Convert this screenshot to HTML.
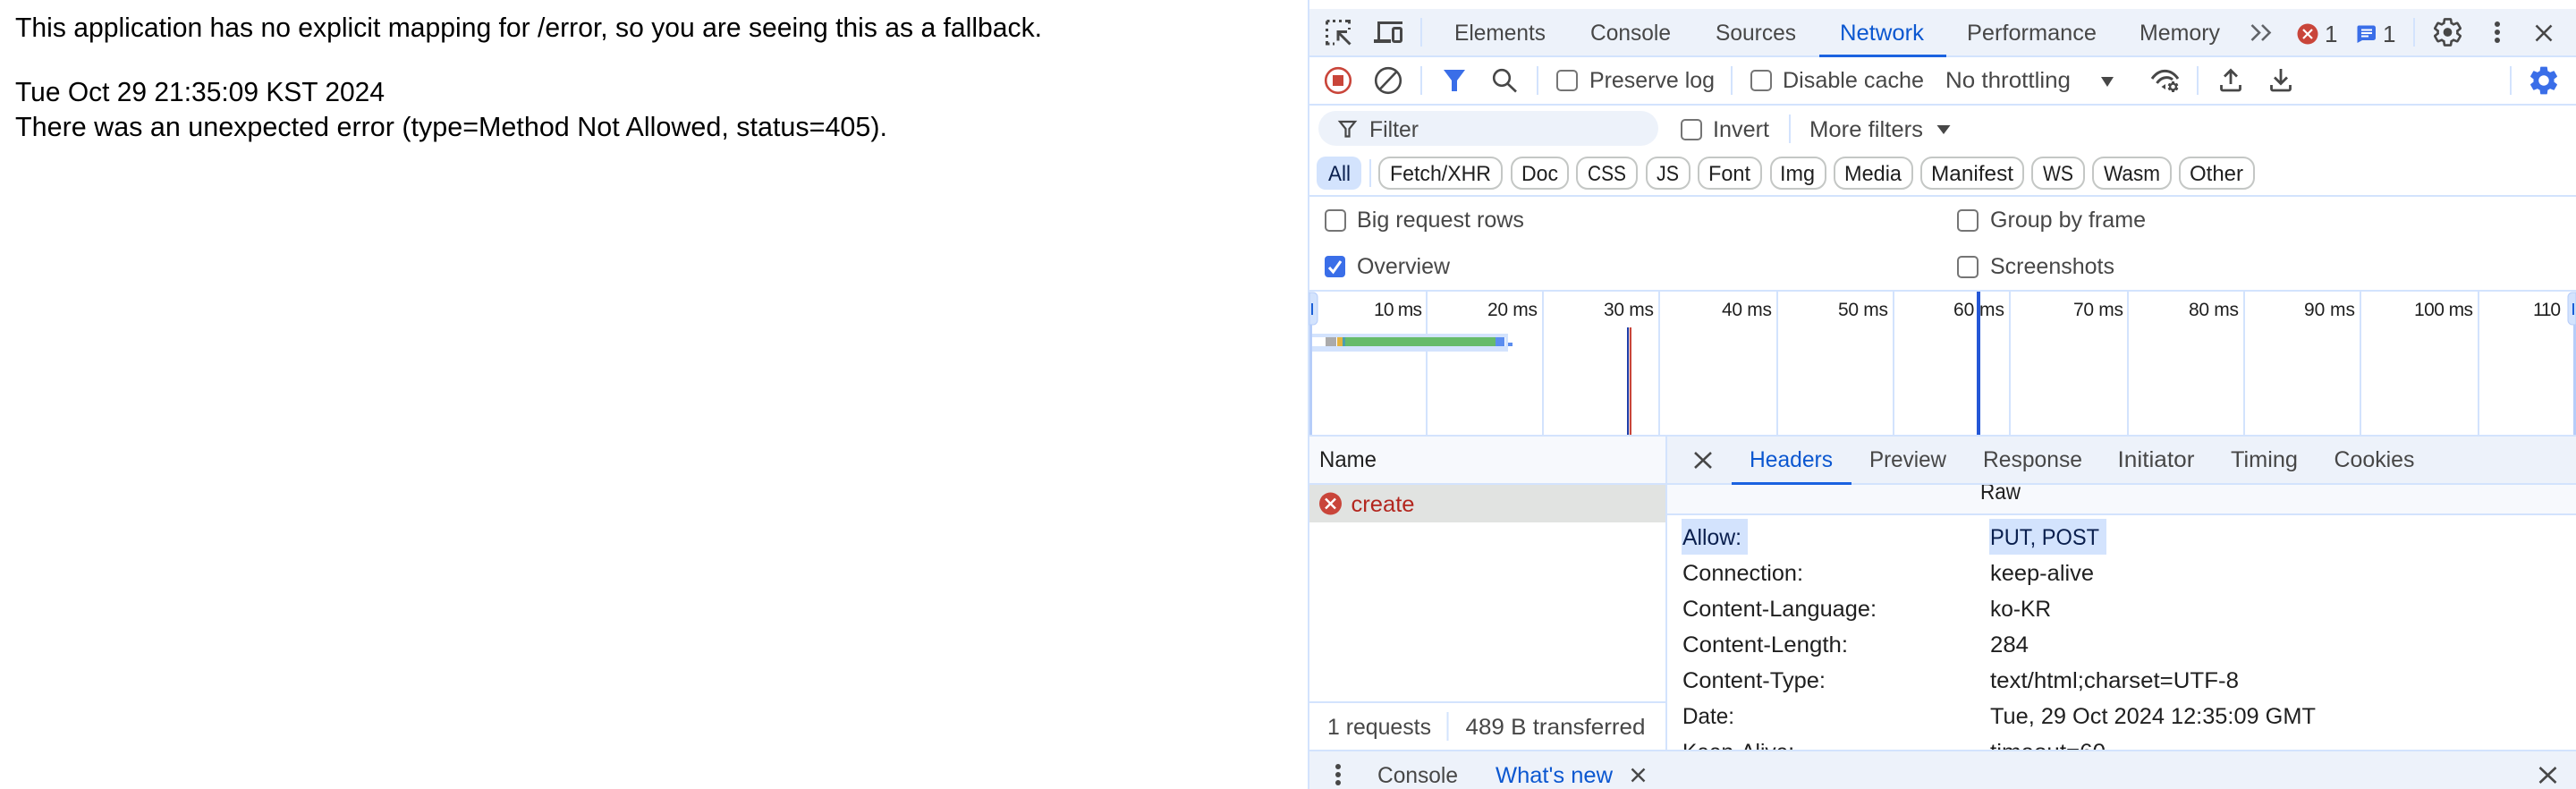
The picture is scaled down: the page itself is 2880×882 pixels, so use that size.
<!DOCTYPE html>
<html lang="en">
<head>
<meta charset="utf-8">
<title>Network DevTools</title>
<style>
html,body{margin:0;padding:0;background:#fff;width:2880px;height:882px;overflow:hidden}
svg{display:block}
text{font-family:"Liberation Sans",sans-serif;font-size:25px;fill:#474747}
.d{fill:#1f1f1f}
.b{fill:#0b57d0}
.s{fill:#0a1f4e}
.m{font-size:31px;fill:#000}
.c{font-size:24.5px;fill:#1f1f1f}
.t{font-size:21px;fill:#1f1f1f}
.l{fill:#d3e3fd}
.i{fill:none;stroke:#474747;stroke-width:2.6}
.cb{fill:#fff;stroke:#757575;stroke-width:2}
.chip{fill:#fff;stroke:#c4c7c5;stroke-width:2}
</style>
</head>
<body>
<svg xmlns="http://www.w3.org/2000/svg" width="2880" height="882" viewBox="0 0 2880 882">
<rect width="2880" height="882" fill="#fff"/>

<!-- page text -->
<text class="m" x="17" y="41" textLength="1148" lengthAdjust="spacingAndGlyphs">This application has no explicit mapping for /error, so you are seeing this as a fallback.</text>
<text class="m" x="17" y="113" textLength="413" lengthAdjust="spacingAndGlyphs">Tue Oct 29 21:35:09 KST 2024</text>
<text class="m" x="17" y="152" textLength="975" lengthAdjust="spacingAndGlyphs">There was an unexpected error (type=Method Not Allowed, status=405).</text>

<!-- devtools left border -->
<rect x="1462" y="0" width="2" height="882" class="l"/>

<!-- main tab bar -->
<rect x="1464" y="10" width="1416" height="52" fill="#edf2fa"/>
<rect x="1464" y="62" width="1416" height="2" class="l"/>

<!-- inspect icon -->
<path d="M1483.500 23.500h3M1490 23.500h3M1497 23.500h3M1504 23.500h4.500v3M1508.500 31v2M1483.500 23.500v4M1483.500 32v3M1483.500 39v3M1483.500 46v3h3M1490 49h2" fill="none" stroke="#474747" stroke-width="3"/>
<path d="M1509.500 49.500L1497 37M1496 45.500V35.500H1506" fill="none" stroke="#474747" stroke-width="3"/>
<!-- device icon -->
<path d="M1541.500 45V25.500H1568" fill="none" stroke="#474747" stroke-width="3"/>
<path d="M1536 46H1555" fill="none" stroke="#474747" stroke-width="4"/>
<rect x="1557.500" y="31.500" width="9" height="15" rx="1.500" fill="none" stroke="#474747" stroke-width="3"/>
<rect x="1588" y="20" width="2" height="32" class="l"/>

<text x="1626" y="45" textLength="102" lengthAdjust="spacingAndGlyphs">Elements</text>
<text x="1778" y="45" textLength="90" lengthAdjust="spacingAndGlyphs">Console</text>
<text x="1918" y="45" textLength="90" lengthAdjust="spacingAndGlyphs">Sources</text>
<text class="b" x="2057" y="45" textLength="94" lengthAdjust="spacingAndGlyphs">Network</text>
<rect x="2034" y="61" width="142" height="3" fill="#1b62e0"/>
<text x="2199" y="45" textLength="145" lengthAdjust="spacingAndGlyphs">Performance</text>
<text x="2392" y="45" textLength="90" lengthAdjust="spacingAndGlyphs">Memory</text>
<path d="M2517.500 28L2526 36.500L2517.500 45M2529 28L2537.500 36.500L2529 45" fill="none" stroke="#606368" stroke-width="2.600"/>

<circle cx="2580" cy="38" r="11.500" fill="#c9453a"/>
<path d="M2575 33L2585 43M2585 33L2575 43" stroke="#fff" stroke-width="2.200"/>
<text x="2599" y="47" style="font-size:26px">1</text>
<path d="M2637.500 28.500H2653.500A2.500 2.500 0 0 1 2656 31V42.500A2.500 2.500 0 0 1 2653.500 45H2641L2635.500 48V30.500A2 2 0 0 1 2637.500 28.500Z" fill="#3a6ee8"/>
<path d="M2640 33.500H2652M2640 37H2652M2640 40.500H2648" stroke="#fff" stroke-width="2"/>
<text x="2664" y="47" style="font-size:26px">1</text>
<rect x="2698" y="20" width="2" height="32" class="l"/>

<!-- gear outline -->
<g transform="translate(2736.500 36) scale(1.520) translate(-12 -12)">
<path d="M19.140 12.940c.04-.3.06-.61.06-.94c0-.32-.02-.64-.07-.94l2.030-1.580c.18-.14.23-.41.12-.61l-1.920-3.320c-.12-.22-.37-.29-.59-.22l-2.390.96c-.5-.38-1.030-.7-1.620-.94L14.400 2.810c-.04-.24-.24-.41-.48-.41h-3.840c-.24 0-.43.17-.47.41L9.250 5.350C8.660 5.590 8.120 5.920 7.630 6.290L5.240 5.330c-.22-.08-.47 0-.59.22L2.740 8.870C2.620 9.080 2.660 9.340 2.860 9.480l2.030 1.580C4.840 11.360 4.800 11.690 4.800 12s.02.64.07.94l-2.030 1.580c-.18.14-.23.41-.12.61l1.920 3.320c.12.22.37.29.59.22l2.390-.96c.5.38 1.030.7 1.620.94l.36 2.540c.05.24.24.41.48.41h3.840c.24 0 .44-.17.47-.41l.36-2.540c.59-.24 1.130-.56 1.620-.94l2.390.96c.22.08.47 0 .59-.22l1.920-3.320c.12-.22.07-.47-.12-.61L19.140 12.940z" fill="none" stroke="#474747" stroke-width="1.700"/>
<circle cx="12" cy="12" r="3.200" fill="#474747"/>
</g>
<circle cx="2792" cy="27" r="3" fill="#474747"/><circle cx="2792" cy="36" r="3" fill="#474747"/><circle cx="2792" cy="45" r="3" fill="#474747"/>
<path d="M2835.500 28.500L2852.500 45.500M2852.500 28.500L2835.500 45.500" fill="none" stroke="#474747" stroke-width="2.600"/>

<!-- toolbar row 2 -->
<rect x="1464" y="116" width="1416" height="2" class="l"/>
<circle cx="1496" cy="90" r="13.800" fill="none" stroke="#c9453a" stroke-width="2.600"/>
<rect x="1490" y="84" width="12" height="12" fill="#c9453a"/>
<circle cx="1552" cy="90" r="13.800" class="i"/>
<path d="M1542.500 100L1561.500 80" class="i"/>
<rect x="1588" y="74" width="2" height="32" class="l"/>
<path d="M1614 78H1638L1629 90V102H1623V90Z" fill="#3a6ee8"/>
<circle cx="1679" cy="87" r="8.800" class="i"/>
<path d="M1685.500 93.500L1695 102.500" class="i"/>
<rect x="1718" y="74" width="2" height="32" class="l"/>
<rect x="1741" y="79" width="22" height="22" rx="4" class="cb"/>
<text x="1777" y="98" textLength="140" lengthAdjust="spacingAndGlyphs">Preserve log</text>
<rect x="1935" y="74" width="2" height="32" class="l"/>
<rect x="1958" y="79" width="22" height="22" rx="4" class="cb"/>
<text x="1993" y="98" textLength="158" lengthAdjust="spacingAndGlyphs">Disable cache</text>
<text x="2175" y="98" textLength="140" lengthAdjust="spacingAndGlyphs">No throttling</text>
<path d="M2349 86H2363L2356 97Z" fill="#474747"/>
<!-- wifi gear -->
<path d="M2406 88C2414 76.500 2427 76.500 2435 88" fill="none" stroke="#474747" stroke-width="3"/>
<path d="M2411.500 93C2416 86 2424 85 2429 89" fill="none" stroke="#474747" stroke-width="3"/>
<path d="M2421 94V100L2416.500 97Z" fill="#474747"/>
<g transform="translate(2429.500 97) scale(.62) translate(-12 -12)">
<path d="M19.140 12.940c.04-.3.06-.61.06-.94c0-.32-.02-.64-.07-.94l2.030-1.580c.18-.14.23-.41.12-.61l-1.920-3.320c-.12-.22-.37-.29-.59-.22l-2.390.96c-.5-.38-1.030-.7-1.620-.94L14.400 2.810c-.04-.24-.24-.41-.48-.41h-3.840c-.24 0-.43.17-.47.41L9.250 5.350C8.660 5.590 8.120 5.920 7.630 6.290L5.240 5.330c-.22-.08-.47 0-.59.22L2.740 8.870C2.620 9.080 2.660 9.340 2.860 9.480l2.030 1.580C4.840 11.360 4.800 11.690 4.800 12s.02.64.07.94l-2.030 1.580c-.18.14-.23.41-.12.61l1.920 3.320c.12.22.37.29.59.22l2.390-.96c.5.38 1.030.7 1.620.94l.36 2.540c.05.24.24.41.48.41h3.840c.24 0 .44-.17.47-.41l.36-2.540c.59-.24 1.130-.56 1.620-.94l2.390.96c.22.08.47 0 .59-.22l1.920-3.320c.12-.22.07-.47-.12-.61L19.140 12.940z M12 15.600c-1.980 0-3.600-1.620-3.600-3.600s1.620-3.600 3.600-3.600s3.600 1.620 3.600 3.600S13.980 15.600 12 15.600z" fill="#474747"/>
</g>
<rect x="2456" y="74" width="2" height="32" class="l"/>
<path d="M2494 94V79M2487 85.500L2494 78.500L2501 85.500M2483.500 95V99.500A1.500 1.500 0 0 0 2485 101H2503A1.500 1.500 0 0 0 2504.500 99.500V95" fill="none" stroke="#474747" stroke-width="2.800"/>
<path d="M2550 77V93M2543 86.500L2550 93.500L2557 86.500M2539.500 95V99.500A1.500 1.500 0 0 0 2541 101H2559A1.500 1.500 0 0 0 2560.500 99.500V95" fill="none" stroke="#474747" stroke-width="2.800"/>
<rect x="2806" y="74" width="2" height="32" class="l"/>
<g transform="translate(2844 90) scale(1.600) translate(-12 -12)">
<path d="M19.140 12.940c.04-.3.06-.61.06-.94c0-.32-.02-.64-.07-.94l2.030-1.580c.18-.14.23-.41.12-.61l-1.920-3.320c-.12-.22-.37-.29-.59-.22l-2.390.96c-.5-.38-1.030-.7-1.620-.94L14.400 2.810c-.04-.24-.24-.41-.48-.41h-3.840c-.24 0-.43.17-.47.41L9.250 5.350C8.660 5.590 8.120 5.920 7.630 6.290L5.240 5.330c-.22-.08-.47 0-.59.22L2.740 8.870C2.620 9.080 2.660 9.340 2.860 9.480l2.030 1.580C4.840 11.360 4.800 11.690 4.800 12s.02.64.07.94l-2.030 1.580c-.18.14-.23.41-.12.61l1.920 3.320c.12.22.37.29.59.22l2.390-.96c.5.38 1.030.7 1.620.94l.36 2.540c.05.24.24.41.48.41h3.840c.24 0 .44-.17.47-.41l.36-2.540c.59-.24 1.130-.56 1.620-.94l2.390.96c.22.08.47 0 .59-.22l1.920-3.320c.12-.22.07-.47-.12-.61L19.140 12.940z M12 15.600c-1.980 0-3.600-1.620-3.600-3.600s1.620-3.600 3.600-3.600s3.600 1.620 3.600 3.600S13.980 15.600 12 15.600z" fill="#3a6ee8"/>
</g>

<!-- filter row -->
<rect x="1474" y="124" width="380" height="39" rx="19.500" fill="#edf2fa"/>
<path d="M1498 136H1515L1508.500 144V152.500H1504.500V144Z" fill="none" stroke="#474747" stroke-width="2.200"/>
<text x="1531" y="153" textLength="55" lengthAdjust="spacingAndGlyphs">Filter</text>
<rect x="1880" y="134" width="22" height="22" rx="4" class="cb"/>
<text x="1915" y="153" textLength="63" lengthAdjust="spacingAndGlyphs">Invert</text>
<rect x="2000" y="128" width="2" height="32" class="l"/>
<text x="2023" y="153" textLength="127" lengthAdjust="spacingAndGlyphs">More filters</text>
<path d="M2165.500 140H2180.500L2173 150Z" fill="#474747"/>

<!-- chips -->
<rect x="1472" y="175" width="50" height="37" rx="10" class="l"/>
<text class="c" x="1485" y="202" textLength="25" lengthAdjust="spacingAndGlyphs" style="fill:#0a1f4e">All</text>
<rect x="1531" y="178" width="2" height="31" class="l"/>
<rect x="1542" y="176" width="137" height="35" rx="12" class="chip"/><text class="c" x="1554" y="202" textLength="113" lengthAdjust="spacingAndGlyphs">Fetch/XHR</text>
<rect x="1690" y="176" width="63" height="35" rx="12" class="chip"/><text class="c" x="1701" y="202" textLength="41" lengthAdjust="spacingAndGlyphs">Doc</text>
<rect x="1763" y="176" width="67" height="35" rx="12" class="chip"/><text class="c" x="1775" y="202" textLength="43" lengthAdjust="spacingAndGlyphs">CSS</text>
<rect x="1841" y="176" width="48" height="35" rx="12" class="chip"/><text class="c" x="1852" y="202" textLength="25" lengthAdjust="spacingAndGlyphs">JS</text>
<rect x="1899" y="176" width="70" height="35" rx="12" class="chip"/><text class="c" x="1910" y="202" textLength="47" lengthAdjust="spacingAndGlyphs">Font</text>
<rect x="1980" y="176" width="61" height="35" rx="12" class="chip"/><text class="c" x="1990" y="202" textLength="39" lengthAdjust="spacingAndGlyphs">Img</text>
<rect x="2051" y="176" width="87" height="35" rx="12" class="chip"/><text class="c" x="2062" y="202" textLength="64" lengthAdjust="spacingAndGlyphs">Media</text>
<rect x="2148" y="176" width="114" height="35" rx="12" class="chip"/><text class="c" x="2159" y="202" textLength="92" lengthAdjust="spacingAndGlyphs">Manifest</text>
<rect x="2272" y="176" width="58" height="35" rx="12" class="chip"/><text class="c" x="2284" y="202" textLength="34" lengthAdjust="spacingAndGlyphs">WS</text>
<rect x="2340" y="176" width="87" height="35" rx="12" class="chip"/><text class="c" x="2352" y="202" textLength="63" lengthAdjust="spacingAndGlyphs">Wasm</text>
<rect x="2437" y="176" width="83" height="35" rx="12" class="chip"/><text class="c" x="2448" y="202" textLength="60" lengthAdjust="spacingAndGlyphs">Other</text>
<rect x="1464" y="218" width="1416" height="2" class="l"/>

<!-- options -->
<rect x="1482" y="235" width="22" height="23" rx="4" class="cb"/>
<text x="1517" y="254" textLength="187" lengthAdjust="spacingAndGlyphs">Big request rows</text>
<rect x="2189" y="235" width="22" height="23" rx="4" class="cb"/>
<text x="2225" y="254" textLength="174" lengthAdjust="spacingAndGlyphs">Group by frame</text>
<rect x="1481" y="286" width="23" height="24" rx="4" fill="#3a6ee8"/>
<path d="M1486 299L1490.500 304L1499 292" fill="none" stroke="#fff" stroke-width="3"/>
<text x="1517" y="306" textLength="104" lengthAdjust="spacingAndGlyphs">Overview</text>
<rect x="2189" y="287" width="22" height="23" rx="4" class="cb"/>
<text x="2225" y="306" textLength="139" lengthAdjust="spacingAndGlyphs">Screenshots</text>
<rect x="1464" y="324" width="1416" height="2" class="l"/>

<!-- overview grid -->
<g class="l">
<rect x="1594" y="326" width="2" height="160"/><rect x="1724" y="326" width="2" height="160"/>
<rect x="1854" y="326" width="2" height="160"/><rect x="1986" y="326" width="2" height="160"/>
<rect x="2116" y="326" width="2" height="160"/><rect x="2246" y="326" width="2" height="160"/>
<rect x="2378" y="326" width="2" height="160"/><rect x="2508" y="326" width="2" height="160"/>
<rect x="2638" y="326" width="2" height="160"/><rect x="2770" y="326" width="2" height="160"/>
</g>
<g>
<text class="t" x="1536" y="353" textLength="54" lengthAdjust="spacing">10 ms</text>
<text class="t" x="1663" y="353" textLength="56" lengthAdjust="spacing">20 ms</text>
<text class="t" x="1793" y="353" textLength="56" lengthAdjust="spacing">30 ms</text>
<text class="t" x="1925" y="353" textLength="56" lengthAdjust="spacing">40 ms</text>
<text class="t" x="2055" y="353" textLength="56" lengthAdjust="spacing">50 ms</text>
<text class="t" x="2184" y="353" textLength="57" lengthAdjust="spacing">60 ms</text>
<text class="t" x="2318" y="353" textLength="56" lengthAdjust="spacing">70 ms</text>
<text class="t" x="2447" y="353" textLength="56" lengthAdjust="spacing">80 ms</text>
<text class="t" x="2576" y="353" textLength="57" lengthAdjust="spacing">90 ms</text>
<text class="t" x="2699" y="353" textLength="66" lengthAdjust="spacing">100 ms</text>
<text class="t" x="2832" y="353" textLength="31" lengthAdjust="spacing">110</text>
</g>

<!-- waterfall bar -->
<rect x="1467" y="373" width="219" height="20" class="l"/>
<rect x="1467" y="377" width="216" height="10" fill="#fff"/>
<rect x="1482" y="377" width="12" height="10" fill="#ababab"/>
<rect x="1495" y="377" width="6" height="10" fill="#e3b341"/>
<rect x="1501" y="377" width="3" height="10" fill="#4a9fb0"/>
<rect x="1504" y="377" width="168" height="10" fill="#66bb6a"/>
<rect x="1672" y="377" width="10" height="10" fill="#5b8def"/>
<rect x="1686" y="383" width="5" height="4" fill="#5b8def"/>

<!-- timing lines -->
<rect x="1819" y="366" width="2" height="120" fill="#1f3ea8"/>
<rect x="1821" y="366" width="0.800" height="120" fill="#fff"/>
<rect x="1821.800" y="366" width="2.200" height="120" fill="#c9453a"/>
<rect x="2210" y="326" width="4" height="160" fill="#2457d6"/>

<!-- handles -->
<rect x="1464" y="363" width="3" height="123" fill="#b6cdf9"/>
<path d="M1464 327H1468A5 5 0 0 1 1473 332V358A5 5 0 0 1 1468 363H1464Z" fill="#d3e3fd" stroke="#b6cdf9" stroke-width="1"/>
<rect x="1466" y="339" width="2" height="13" fill="#1b5fd6"/>
<rect x="2877" y="363" width="3" height="123" fill="#b6cdf9"/>
<path d="M2880 327H2876A5 5 0 0 0 2871 332V358A5 5 0 0 0 2876 363H2880Z" fill="#d3e3fd" stroke="#b6cdf9" stroke-width="1"/>
<rect x="2876" y="339" width="2" height="13" fill="#1b5fd6"/>
<rect x="1464" y="486" width="1416" height="2" class="l"/>

<!-- name column -->
<rect x="1464" y="488" width="398" height="52" fill="#f7f9fd"/>
<text class="d" x="1475" y="522" textLength="64" lengthAdjust="spacingAndGlyphs">Name</text>
<rect x="1464" y="540" width="398" height="2" class="l"/>
<rect x="1464" y="542" width="398" height="42" fill="#e1e3e1"/>
<circle cx="1487.500" cy="563" r="12.500" fill="#c9453a"/>
<path d="M1482 557.500L1493 568.500M1493 557.500L1482 568.500" stroke="#fff" stroke-width="2.400"/>
<text x="1510.500" y="572" textLength="71" lengthAdjust="spacingAndGlyphs" style="fill:#b3261e">create</text>
<rect x="1464" y="784" width="398" height="2" class="l"/>
<text x="1484" y="821" textLength="116" lengthAdjust="spacingAndGlyphs">1 requests</text>
<rect x="1617.500" y="796" width="2" height="32" class="l"/>
<text x="1638.500" y="821" textLength="201" lengthAdjust="spacingAndGlyphs">489 B transferred</text>
<rect x="1862" y="488" width="2" height="350" class="l"/>

<!-- headers content -->
<rect x="1864" y="542" width="1016" height="32" fill="#f7f9fd"/>
<text class="d" x="2214" y="558" textLength="45" lengthAdjust="spacingAndGlyphs">Raw</text>
<rect x="1864" y="574" width="1016" height="2" class="l"/>
<rect x="1880" y="580" width="74" height="40" class="l"/>
<rect x="2224" y="580" width="131" height="40" class="l"/>
<text class="s" x="1881" y="609" textLength="66" lengthAdjust="spacingAndGlyphs">Allow:</text>
<text class="s" x="2225" y="609" textLength="122" lengthAdjust="spacingAndGlyphs">PUT, POST</text>
<text class="d" x="1881" y="649" textLength="135" lengthAdjust="spacingAndGlyphs">Connection:</text>
<text class="d" x="2225" y="649" textLength="116" lengthAdjust="spacingAndGlyphs">keep-alive</text>
<text class="d" x="1881" y="689" textLength="217" lengthAdjust="spacingAndGlyphs">Content-Language:</text>
<text class="d" x="2225" y="689" textLength="68" lengthAdjust="spacingAndGlyphs">ko-KR</text>
<text class="d" x="1881" y="729" textLength="185" lengthAdjust="spacingAndGlyphs">Content-Length:</text>
<text class="d" x="2225" y="729" textLength="43" lengthAdjust="spacingAndGlyphs">284</text>
<text class="d" x="1881" y="769" textLength="160" lengthAdjust="spacingAndGlyphs">Content-Type:</text>
<text class="d" x="2225" y="769" textLength="278" lengthAdjust="spacingAndGlyphs">text/html;charset=UTF-8</text>
<text class="d" x="1881" y="809" textLength="58" lengthAdjust="spacingAndGlyphs">Date:</text>
<text class="d" x="2225" y="809" textLength="364" lengthAdjust="spacingAndGlyphs">Tue, 29 Oct 2024 12:35:09 GMT</text>
<text class="d" x="1881" y="849" textLength="125" lengthAdjust="spacingAndGlyphs">Keep-Alive:</text>
<text class="d" x="2225" y="849" textLength="129" lengthAdjust="spacingAndGlyphs">timeout=60</text>

<!-- details tab bar -->
<rect x="1864" y="488" width="1016" height="52" fill="#edf2fa"/>
<rect x="1864" y="540" width="1016" height="2" class="l"/>
<path d="M1895 506L1913 523M1913 506L1895 523" fill="none" stroke="#474747" stroke-width="2.600"/>
<text class="b" x="1956" y="522" textLength="93" lengthAdjust="spacingAndGlyphs">Headers</text>
<rect x="1936" y="539" width="134" height="3" fill="#1b62e0"/>
<text x="2090" y="522" textLength="86" lengthAdjust="spacingAndGlyphs">Preview</text>
<text x="2217" y="522" textLength="111" lengthAdjust="spacingAndGlyphs">Response</text>
<text x="2367.500" y="522" textLength="86" lengthAdjust="spacingAndGlyphs">Initiator</text>
<text x="2494" y="522" textLength="75" lengthAdjust="spacingAndGlyphs">Timing</text>
<text x="2609.500" y="522" textLength="90" lengthAdjust="spacingAndGlyphs">Cookies</text>

<!-- drawer -->
<rect x="1464" y="838" width="1416" height="2" class="l"/>
<rect x="1464" y="840" width="1416" height="42" fill="#edf2fa"/>
<circle cx="1496" cy="857" r="3" fill="#474747"/><circle cx="1496" cy="866" r="3" fill="#474747"/><circle cx="1496" cy="875" r="3" fill="#474747"/>
<text x="1540" y="875" textLength="90" lengthAdjust="spacingAndGlyphs">Console</text>
<text class="b" x="1672" y="875" textLength="131" lengthAdjust="spacingAndGlyphs">What's new</text>
<path d="M1824.500 859.500L1838.500 873.500M1838.500 859.500L1824.500 873.500" fill="none" stroke="#474747" stroke-width="2.400"/>
<path d="M2839.500 858L2857.500 875M2857.500 858L2839.500 875" fill="none" stroke="#474747" stroke-width="2.600"/>
</svg>
</body>
</html>
